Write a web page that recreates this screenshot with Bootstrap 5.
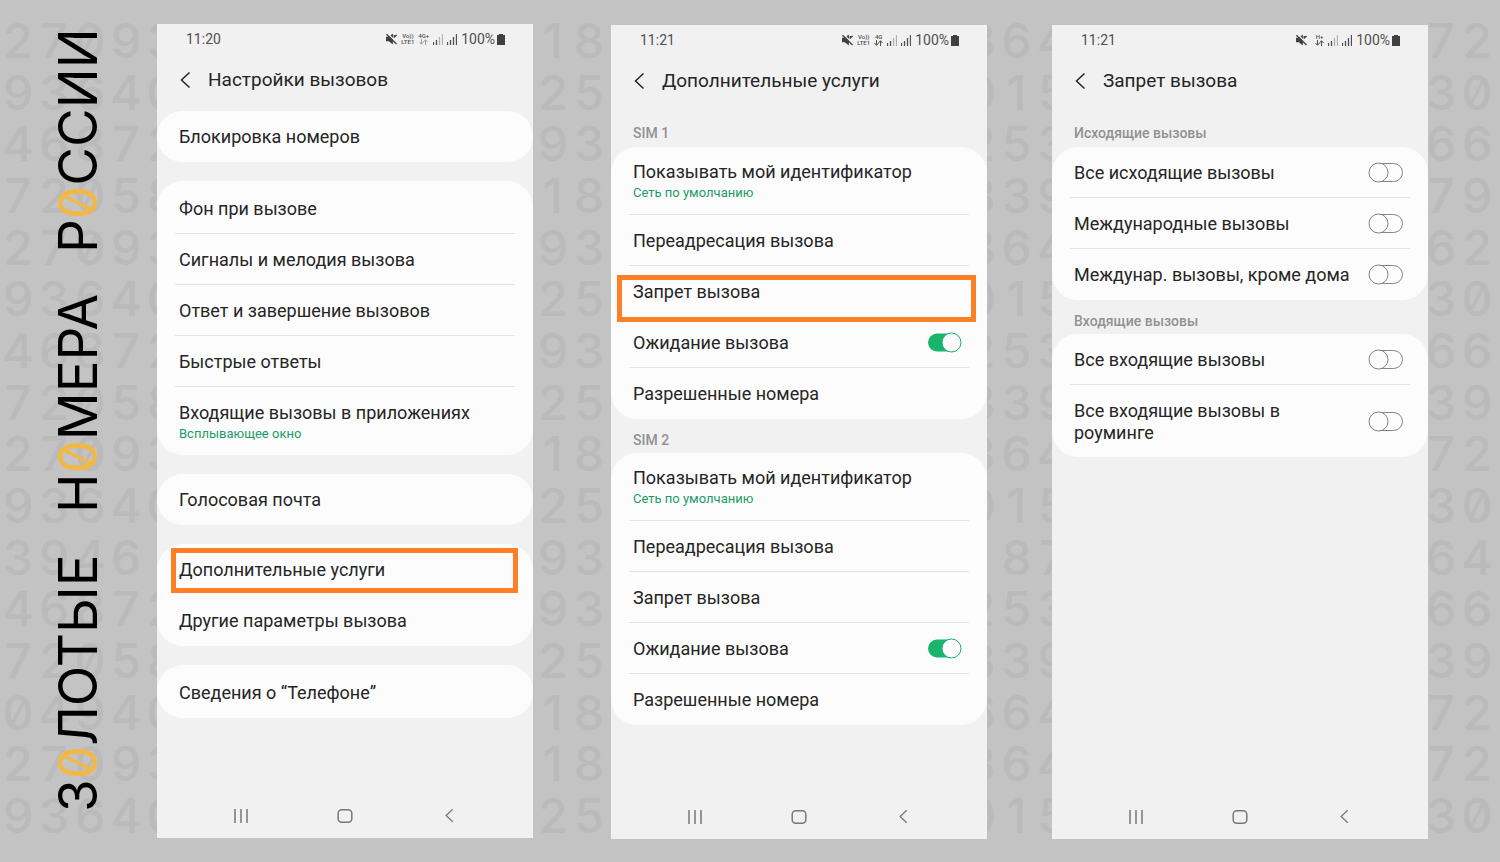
<!DOCTYPE html>
<html lang="ru">
<head>
<meta charset="utf-8">
<meta name="viewport" content="width=device-width, initial-scale=1">
<title>Золотые номера России — запрет вызова</title>
<link href="https://cdn.jsdelivr.net/npm/bootstrap@5.3.0/dist/css/bootstrap.min.css" rel="stylesheet">
<style>
  body { background: #c3c3c3; font-family: Roboto, "Noto Sans", sans-serif; color: #252525; }
  .board { display: grid; grid-template-columns: 157fr 376fr 78fr 376fr 65fr 376fr 72fr; min-height: 100vh; }

  /* digit wallpaper in the gutters */
  .gutter { display: grid; grid-template-rows: repeat(16, 1fr); grid-template-columns: minmax(0, 1fr); padding: 15px 0 20px; min-width: 0; overflow: hidden;
            font: 500 48px/1 Inter, sans-serif; font-feature-settings: "zero"; color: #bababa; }
  .gutter > div { display: flex; align-items: center; min-height: 0; }
  .gutter span { flex: 0 0 36px; text-align: center; }
  .gutter-first { padding-left: 2px; }
  .gutter-mid > div { justify-content: center; padding-right: 6px; }
  .gutter-end > div { justify-content: center; padding-right: 10px; }

  .brand-side { display: grid; min-width: 0; }
  .brand-side > * { grid-area: 1 / 1; }
  .brand-name { writing-mode: vertical-rl; transform: rotate(180deg); justify-self: center; display: flex;
                justify-content: space-between; margin: 28px 0 50px; font: 400 53px/1 Inter, sans-serif;
                font-feature-settings: "zero"; color: #000; z-index: 1; }
  .brand-name i { font-style: normal; color: #f2b845; }

  .phone { background: #f1f1f1; margin: 24px 0; min-width: 0; }
  .phone-low { margin: 25px 0 23px; }
  .status { height: 30px; padding: 0 28px 0 29px; font-size: 14px; color: #505050; }
  .status-net { font: 500 6px/6px Roboto, sans-serif; text-align: center; }
  .status-load { margin-right: 2px; }
  .phone-head { height: 51px; padding: 0 17px; }
  .phone-head h1 { font-size: 19px; line-height: 24px; }
  .back { width: 22px; height: 24px; }
  .phone-body { gap: 19px; padding-top: 6px; }
  .phone-body-labeled { gap: 0; padding-top: 0; }
  .group-label { font-size: 14px; font-weight: 500; line-height: 20px; color: #929292; padding: 0 22px; margin: 0; }
  .group-label-first { padding-top: 17px; padding-bottom: 4px; }
  .group-label-next { padding-top: 11px; padding-bottom: 3px; }

  .tiles { background: #fcfcfc; border-radius: 26px; padding: 0 18px; }
  .tiles-roomy { padding-top: 2px; }
  .tiles > .tile { border: 0; border-bottom: 1px solid #e3e3e3; background: none; color: #252525; padding: 1px 4px 0;
                   min-height: 51px; font-size: 18px; line-height: 22px; display: flex; align-items: center;
                   justify-content: space-between; position: relative; text-decoration: none; border-radius: 0; }
  .tiles > .tile:last-child { border-bottom: 0; }
  .tiles > .tile-picked { border-bottom-color: transparent; }
  .tiles > .tile-two { min-height: 68px; padding-top: 3px; }
  .tiles > .tile-tall { min-height: 72px; }
  .tile small { display: block; font-size: 13px; line-height: 20px; color: #1b9b68; }
  .tile-picked::after { content: ""; position: absolute; inset: 4px -3px 1px -4px; border: 5px solid #ff7f27; }
  .phone-low .tile-picked::after { inset: 9px -7px -6px -12px; }

  .tile .toggle { appearance: none; width: 36px; height: 22px; margin: 0 2px 0 0; flex: none; border: 0; border-radius: 0;
            background: url("data:image/svg+xml,%3Csvg xmlns='http://www.w3.org/2000/svg' viewBox='0 0 36 22'%3E%3Cg fill='%23fcfcfc' stroke='%23858585'%3E%3Crect x='1.5' y='1.5' width='33' height='18' rx='9'/%3E%3Ccircle cx='10.5' cy='10.5' r='9.5'/%3E%3C/g%3E%3C/svg%3E") center/100% no-repeat; }
  .tile .toggle:checked { background: url("data:image/svg+xml,%3Csvg xmlns='http://www.w3.org/2000/svg' viewBox='0 0 36 22'%3E%3Crect x='1' y='1.5' width='33' height='18' rx='9' fill='%231ab56b'/%3E%3Ccircle cx='24.5' cy='10.5' r='9.5' fill='%23fcfcfc' stroke='%231ab56b'/%3E%3C/svg%3E") center/100% no-repeat; }

  .nav-keys { height: 46px; padding: 0 32px; }
  .nav-keys button { color: #777; }
</style>
</head>
<body>
<svg class="d-none">
  <symbol id="mute" viewBox="0 0 12 12"><path d="M0 3.500h3L7.500 0v12L3 8.500H0z" fill="#404040"/><path d="M2 0l10 10.500" stroke="#f1f1f1" stroke-width="1.500"/><path d="M.5 .8l11 10.700M8.500 4.500l3-3M9 1.500v2" stroke="#404040" stroke-width="1.500"/></symbol>
  <symbol id="bars" viewBox="0 0 10 11"><path d="M.5 8v3M3.500 6v5M6.500 3v8M9.500 0v11" stroke="#505050" stroke-width="1.300"/></symbol>
  <symbol id="bars-weak" viewBox="0 0 10 11"><path d="M.5 8v3M3.500 6v5" stroke="#505050" stroke-width="1.300"/><path d="M6.500 3v8M9.500 0v11" stroke="#b0b0b0" stroke-width="1.300"/></symbol>
  <symbol id="arrows" viewBox="0 0 9 6"><path d="M2.500 0v5M.5 3l2 2.300 2-2.300M6.500 6V1M4.500 3l2-2.300 2 2.300" fill="none" stroke="currentColor"/></symbol>
  <symbol id="battery" viewBox="0 0 8 11"><path d="M2 0h4v1h2v10H0V1h2z" fill="#404040"/></symbol>
  <symbol id="chev" viewBox="0 0 12 18"><path d="M10.500 1.500L2.500 9l8 7.500" fill="none" stroke="currentColor" stroke-width="1.500"/></symbol>
  <symbol id="recents" viewBox="0 0 16 16"><path d="M2 1v14M8 1v14M14 1v14" stroke="currentColor" stroke-width="1.500"/></symbol>
  <symbol id="home" viewBox="0 0 16 16"><rect x="1.200" y="1.700" width="13.600" height="12.600" rx="3.500" fill="none" stroke="currentColor" stroke-width="1.500"/></symbol>
</svg>

<main class="board">
  <div class="brand-side">
    <div class="gutter" aria-hidden="true" data-rows="27093 93640 46872 72058 27093 93640 46872 72058 27093 93640 3946 46872 72058 04940 27093 93640"></div>
    <div class="brand-name"><span>З<i>0</i>ЛОТЫЕ</span><span>Н<i>0</i>МЕРА</span><span>Р<i>0</i>ССИИ</span></div>
  </div>

  <section class="phone d-flex flex-column">
    <div class="status d-flex align-items-center justify-content-between">
      <span>11:20</span>
      <span class="d-flex align-items-center">
        <svg width="11" height="12" class="me-1"><use href="#mute"/></svg>
        <span class="status-net me-1">Vo))<br>LTE1</span>
        <span class="status-net d-flex flex-column align-items-center me-1">4G+<svg width="9" height="6" color="#a0a0a0"><use href="#arrows"/></svg></span>
        <svg width="10" height="11" class="me-1"><use href="#bars-weak"/></svg>
        <svg width="10" height="11" class="me-1"><use href="#bars"/></svg>
        <span class="status-load">100%</span><svg width="8" height="11"><use href="#battery"/></svg>
      </span>
    </div>
    <header class="phone-head d-flex align-items-center">
      <button type="button" class="back btn p-0 border-0 d-flex align-items-center justify-content-center" aria-label="Назад"><svg width="12" height="18"><use href="#chev"/></svg></button>
      <h1 class="m-0 ms-2 ps-1 fw-normal">Настройки вызовов</h1>
    </header>
    <div class="phone-body d-flex flex-column">
      <div class="tiles list-group"><a href="#" class="tile list-group-item">Блокировка номеров</a></div>
      <div class="tiles tiles-roomy list-group">
        <a href="#" class="tile list-group-item">Фон при вызове</a>
        <a href="#" class="tile list-group-item">Сигналы и мелодия вызова</a>
        <a href="#" class="tile list-group-item">Ответ и завершение вызовов</a>
        <a href="#" class="tile list-group-item">Быстрые ответы</a>
        <a href="#" class="tile tile-two list-group-item"><span>Входящие вызовы в приложениях<small>Всплывающее окно</small></span></a>
      </div>
      <div class="tiles list-group"><a href="#" class="tile list-group-item">Голосовая почта</a></div>
      <div class="tiles list-group">
        <a href="#" class="tile tile-picked list-group-item">Дополнительные услуги</a>
        <a href="#" class="tile list-group-item">Другие параметры вызова</a>
      </div>
      <div class="tiles tiles-roomy list-group"><a href="#" class="tile list-group-item">Сведения о “Телефоне”</a></div>
    </div>
    <nav class="nav-keys d-flex mt-auto">
      <button type="button" class="btn col p-0 border-0" aria-label="Недавние"><svg width="16" height="16"><use href="#recents"/></svg></button>
      <button type="button" class="btn col p-0 border-0" aria-label="Домой"><svg width="16" height="16"><use href="#home"/></svg></button>
      <button type="button" class="btn col p-0 border-0" aria-label="Назад"><svg width="10" height="15"><use href="#chev"/></svg></button>
    </nav>
  </section>

  <div class="gutter gutter-first" aria-hidden="true" data-rows="18 25 93 18 93 25 93 25 18 25 93 93 25 18 18 25"></div>

  <section class="phone phone-low d-flex flex-column">
    <div class="status d-flex align-items-center justify-content-between">
      <span>11:21</span>
      <span class="d-flex align-items-center">
        <svg width="11" height="12" class="me-1"><use href="#mute"/></svg>
        <span class="status-net me-1">Vo))<br>LTE1</span>
        <span class="status-net d-flex flex-column align-items-center me-1">4G<svg width="9" height="6"><use href="#arrows"/></svg></span>
        <svg width="10" height="11" class="me-1"><use href="#bars-weak"/></svg>
        <svg width="10" height="11" class="me-1"><use href="#bars"/></svg>
        <span class="status-load">100%</span><svg width="8" height="11"><use href="#battery"/></svg>
      </span>
    </div>
    <header class="phone-head d-flex align-items-center">
      <button type="button" class="back btn p-0 border-0 d-flex align-items-center justify-content-center" aria-label="Назад"><svg width="12" height="18"><use href="#chev"/></svg></button>
      <h1 class="m-0 ms-2 ps-1 fw-normal">Дополнительные услуги</h1>
    </header>
    <div class="phone-body phone-body-labeled d-flex flex-column">
      <h2 class="group-label group-label-first">SIM 1</h2>
      <div class="tiles list-group">
        <a href="#" class="tile tile-two list-group-item"><span>Показывать мой идентификатор<small>Сеть по умолчанию</small></span></a>
        <a href="#" class="tile list-group-item">Переадресация вызова</a>
        <a href="#" class="tile tile-picked list-group-item">Запрет вызова</a>
        <div class="tile list-group-item"><label for="wait1">Ожидание вызова</label><input class="toggle form-check-input" type="checkbox" role="switch" id="wait1" checked></div>
        <a href="#" class="tile list-group-item">Разрешенные номера</a>
      </div>
      <h2 class="group-label group-label-next">SIM 2</h2>
      <div class="tiles list-group">
        <a href="#" class="tile tile-two list-group-item"><span>Показывать мой идентификатор<small>Сеть по умолчанию</small></span></a>
        <a href="#" class="tile list-group-item">Переадресация вызова</a>
        <a href="#" class="tile list-group-item">Запрет вызова</a>
        <div class="tile list-group-item"><label for="wait2">Ожидание вызова</label><input class="toggle form-check-input" type="checkbox" role="switch" id="wait2" checked></div>
        <a href="#" class="tile list-group-item">Разрешенные номера</a>
      </div>
    </div>
    <nav class="nav-keys d-flex mt-auto">
      <button type="button" class="btn col p-0 border-0" aria-label="Недавние"><svg width="16" height="16"><use href="#recents"/></svg></button>
      <button type="button" class="btn col p-0 border-0" aria-label="Домой"><svg width="16" height="16"><use href="#home"/></svg></button>
      <button type="button" class="btn col p-0 border-0" aria-label="Назад"><svg width="10" height="15"><use href="#chev"/></svg></button>
    </nav>
  </section>

  <div class="gutter gutter-mid" aria-hidden="true" data-rows="364 015 253 839 364 015 253 839 364 015 _87 253 839 664 364 015"></div>

  <section class="phone phone-low d-flex flex-column">
    <div class="status d-flex align-items-center justify-content-between">
      <span>11:21</span>
      <span class="d-flex align-items-center">
        <svg width="11" height="12" class="me-2"><use href="#mute"/></svg>
        <span class="status-net d-flex flex-column align-items-center me-1">H+<svg width="9" height="6"><use href="#arrows"/></svg></span>
        <svg width="10" height="11" class="me-1"><use href="#bars-weak"/></svg>
        <svg width="10" height="11" class="me-1"><use href="#bars"/></svg>
        <span class="status-load">100%</span><svg width="8" height="11"><use href="#battery"/></svg>
      </span>
    </div>
    <header class="phone-head d-flex align-items-center">
      <button type="button" class="back btn p-0 border-0 d-flex align-items-center justify-content-center" aria-label="Назад"><svg width="12" height="18"><use href="#chev"/></svg></button>
      <h1 class="m-0 ms-2 ps-1 fw-normal">Запрет вызова</h1>
    </header>
    <div class="phone-body phone-body-labeled d-flex flex-column">
      <h2 class="group-label group-label-first">Исходящие вызовы</h2>
      <div class="tiles list-group">
        <div class="tile list-group-item"><label for="out1">Все исходящие вызовы</label><input class="toggle form-check-input" type="checkbox" role="switch" id="out1"></div>
        <div class="tile list-group-item"><label for="out2">Международные вызовы</label><input class="toggle form-check-input" type="checkbox" role="switch" id="out2"></div>
        <div class="tile list-group-item"><label for="out3">Междунар. вызовы, кроме дома</label><input class="toggle form-check-input" type="checkbox" role="switch" id="out3"></div>
      </div>
      <h2 class="group-label group-label-next">Входящие вызовы</h2>
      <div class="tiles list-group">
        <div class="tile list-group-item"><label for="in1">Все входящие вызовы</label><input class="toggle form-check-input" type="checkbox" role="switch" id="in1"></div>
        <div class="tile tile-tall list-group-item"><label for="in2">Все входящие вызовы в<br>роуминге</label><input class="toggle form-check-input" type="checkbox" role="switch" id="in2"></div>
      </div>
    </div>
    <nav class="nav-keys d-flex mt-auto">
      <button type="button" class="btn col p-0 border-0" aria-label="Недавние"><svg width="16" height="16"><use href="#recents"/></svg></button>
      <button type="button" class="btn col p-0 border-0" aria-label="Домой"><svg width="16" height="16"><use href="#home"/></svg></button>
      <button type="button" class="btn col p-0 border-0" aria-label="Назад"><svg width="10" height="15"><use href="#chev"/></svg></button>
    </nav>
  </section>

  <div class="gutter gutter-end" aria-hidden="true" data-rows="72 30 66 79 62 30 66 39 72 30 64 66 39 72 72 30"></div>
</main>

<script src="https://cdn.jsdelivr.net/npm/bootstrap@5.3.0/dist/js/bootstrap.bundle.min.js"></script>
<script>
  // fill each gutter with its rows of digits; an underscore is an empty cell
  document.querySelectorAll('[data-rows]').forEach(function (gutter) {
    gutter.dataset.rows.split(' ').forEach(function (digits) {
      var row = document.createElement('div');
      digits.split('').forEach(function (digit) {
        var cell = document.createElement('span');
        cell.textContent = digit === '_' ? '' : digit;
        row.appendChild(cell);
      });
      gutter.appendChild(row);
    });
  });
</script>
</body>
</html>
